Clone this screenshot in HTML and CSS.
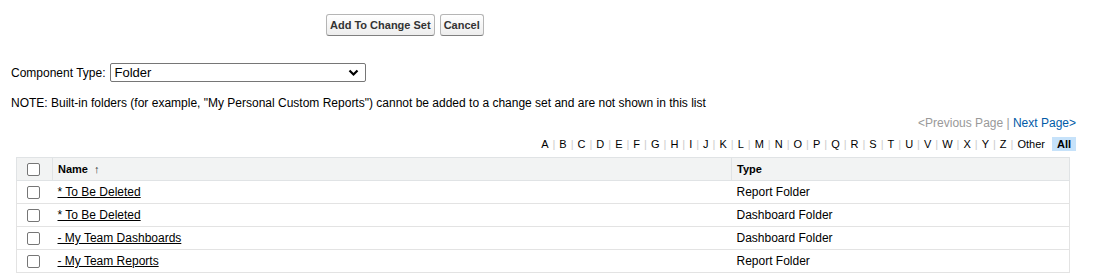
FILE: index.html
```html
<!DOCTYPE html>
<html lang="en">
<head>
  <meta charset="UTF-8" />
  <title>Add To Change Set</title>
  <link rel="stylesheet" href="styles.css">
</head>
<body>

  <div class="actions">
    <button class="btn">Add To Change Set</button>
    <button class="btn">Cancel</button>
  </div>

  <div class="filter">
    <label for="ctype">Component Type:</label>
    <div class="select">
      <span>Folder</span>
      <svg width="11" height="8" viewBox="0 0 11 8"><path d="M1.5 1.5 L5.5 5.5 L9.5 1.5" fill="none" stroke="#000" stroke-width="2.2"/></svg>
    </div>
  </div>

  <p class="note">NOTE: Built-in folders (for example, "My Personal Custom Reports") cannot be added to a change set and are not shown in this list</p>

  <div class="pager">
    <span class="off">&lt;Previous Page</span> | <a href="#">Next Page&gt;</a>
  </div>

  <div class="alpha">
    <a href="#">A</a><i>|</i><a href="#">B</a><i>|</i><a href="#">C</a><i>|</i><a href="#">D</a><i>|</i><a href="#">E</a><i>|</i><a href="#">F</a><i>|</i><a href="#">G</a><i>|</i><a href="#">H</a><i>|</i><a href="#">I</a><i>|</i><a href="#">J</a><i>|</i><a href="#">K</a><i>|</i><a href="#">L</a><i>|</i><a href="#">M</a><i>|</i><a href="#">N</a><i>|</i><a href="#">O</a><i>|</i><a href="#">P</a><i>|</i><a href="#">Q</a><i>|</i><a href="#">R</a><i>|</i><a href="#">S</a><i>|</i><a href="#">T</a><i>|</i><a href="#">U</a><i>|</i><a href="#">V</a><i>|</i><a href="#">W</a><i>|</i><a href="#">X</a><i>|</i><a href="#">Y</a><i>|</i><a href="#">Z</a><i>|</i><a href="#">Other</a><b class="cur">All</b>
  </div>

  <table class="list">
    <thead>
      <tr>
        <th class="chk"><span class="box"></span></th>
        <th class="name">Name <span class="sort">&#8593;</span></th>
        <th>Type</th>
      </tr>
    </thead>
    <tbody>
      <tr><td class="chk"><span class="box"></span></td><td><a href="#">* To Be Deleted</a></td><td>Report Folder</td></tr>
      <tr><td class="chk"><span class="box"></span></td><td><a href="#">* To Be Deleted</a></td><td>Dashboard Folder</td></tr>
      <tr><td class="chk"><span class="box"></span></td><td><a href="#">- My Team Dashboards</a></td><td>Dashboard Folder</td></tr>
      <tr><td class="chk"><span class="box"></span></td><td><a href="#">- My Team Reports</a></td><td>Report Folder</td></tr>
    </tbody>
  </table>

</body>
</html>
```

FILE: styles.css
```css
body { margin: 0; font-family: Arial, "Liberation Sans", sans-serif; font-size: 12px; color: #000; background: #fff; }

.actions { display: flex; gap: 5px; padding: 14px 0 0 326px; }
.btn {
  height: 22px;
  padding: 0 3px;
  font: bold 11px Arial, "Liberation Sans", sans-serif;
  color: #333;
  background: linear-gradient(#fff, #ededed);
  border: 1px solid #b5b5b5;
  border-bottom-color: #7f7f7f;
  border-radius: 3px;
}

.filter { display: flex; align-items: center; gap: 4px; margin: 27px 0 0 11px; }
.select {
  width: 244px;
  height: 17px;
  display: flex;
  align-items: center;
  justify-content: space-between;
  padding: 0 6px 0 4px;
  border: 1px solid #767676;
  border-radius: 2px;
  font-size: 13px;
}

.note { margin: 14px 0 0 11px; }

.pager { text-align: right; margin: 6px 17px 0 0; font-size: 12px; color: #999; }
.pager .off { color: #999; }
.pager a { color: #015ba7; text-decoration: none; }

.alpha { text-align: right; margin: 8px 17px 0 0; font-size: 11px; }
.alpha a { color: #000; text-decoration: none; padding: 0 4px; }
.alpha i { font-style: normal; color: #ccc; }
.alpha .cur { background: #c6e2fa; padding: 1px 5px; margin-left: 3px; }

.list { border-collapse: collapse; width: 1054px; margin: 7px 0 0 16px; }
.list th, .list td { height: 22px; padding: 0 5px; text-align: left; border-bottom: 1px solid #e3e3e3; }
.list th { background: #f2f3f3; border: 1px solid #e0e3e5; font-size: 11px; color: #000; }
.list td:first-child { border-left: 1px solid #e3e3e3; }
.list td:last-child { border-right: 1px solid #e3e3e3; }
.list .chk { width: 25px; padding: 0 0 0 10px; }
.list .name { width: 668px; }
.list .sort { font-weight: normal; font-size: 11px; color: #333; margin-left: 3px; }
.list td a { color: #000; }
.box { display: block; width: 11px; height: 11px; border: 1px solid #767676; border-radius: 2px; background: #fff; }
```
